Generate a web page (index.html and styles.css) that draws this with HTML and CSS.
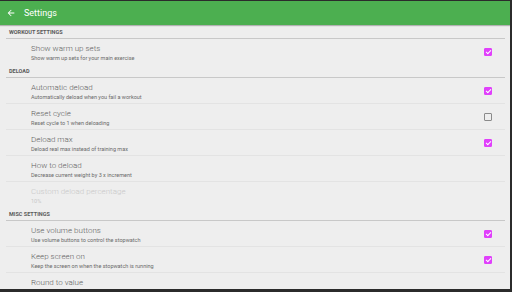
FILE: index.html
```html
<!DOCTYPE html>
<html lang="en">
<head>
    <meta charset="UTF-8">
    <meta name="viewport" content="width=device-width, initial-scale=1.0">
    <title>Settings</title>
    <link rel="stylesheet" href="styles.css">
</head>
<body>
    <div class="screen">
        <div class="toolbar">
            <svg class="back" width="10" height="10" viewBox="0 0 24 24">
                <path d="M20 11H7.83l5.59-5.59L12 4l-8 8 8 8 1.41-1.41L7.83 13H20v-2z" fill="#fff"/>
            </svg>
            <span class="title">Settings</span>
        </div>

        <div class="list">
            <div class="category">Workout settings</div>
            <div class="pref last">
                <div class="text">
                    <div class="pref-title">Show warm up sets</div>
                    <div class="pref-summary">Show warm up sets for your main exercise</div>
                </div>
                <span class="check on"></span>
            </div>

            <div class="category">Deload</div>
            <div class="pref">
                <div class="text">
                    <div class="pref-title">Automatic deload</div>
                    <div class="pref-summary">Automatically deload when you fail a workout</div>
                </div>
                <span class="check on"></span>
            </div>
            <div class="pref">
                <div class="text">
                    <div class="pref-title">Reset cycle</div>
                    <div class="pref-summary">Reset cycle to 1 when deloading</div>
                </div>
                <span class="check"></span>
            </div>
            <div class="pref">
                <div class="text">
                    <div class="pref-title">Deload max</div>
                    <div class="pref-summary">Deload real max instead of training max</div>
                </div>
                <span class="check on"></span>
            </div>
            <div class="pref">
                <div class="text">
                    <div class="pref-title">How to deload</div>
                    <div class="pref-summary">Decrease current weight by 3 x increment</div>
                </div>
            </div>
            <div class="pref last disabled">
                <div class="text">
                    <div class="pref-title">Custom deload percentage</div>
                    <div class="pref-summary">10%</div>
                </div>
            </div>

            <div class="category">Misc settings</div>
            <div class="pref">
                <div class="text">
                    <div class="pref-title">Use volume buttons</div>
                    <div class="pref-summary">Use volume buttons to control the stopwatch</div>
                </div>
                <span class="check on"></span>
            </div>
            <div class="pref">
                <div class="text">
                    <div class="pref-title">Keep screen on</div>
                    <div class="pref-summary">Keep the screen on when the stopwatch is running</div>
                </div>
                <span class="check on"></span>
            </div>
            <div class="pref">
                <div class="text">
                    <div class="pref-title">Round to value</div>
                    <div class="pref-summary">2.5</div>
                </div>
            </div>
        </div>
    </div>
</body>
</html>
```

FILE: styles.css
```css
html, body {
    margin: 0;
    padding: 0;
}
body {
    font-family: Roboto, "Liberation Sans", sans-serif;
    background-color: #2b2b2b;
    overflow: hidden;
}
.screen {
    width: 510px;
    height: 288px;
    margin-top: 1px;
    background-color: #eeeeee;
    overflow: hidden;
}
.toolbar {
    height: 24px;
    background-color: #4caf50;
    display: flex;
    align-items: center;
    padding-left: 6px;
    box-shadow: 0 1px 1px rgba(0, 0, 0, 0.25);
}
.back {
    margin-right: 8px;
}
.title {
    color: #ffffff;
    font-size: 9px;
}
.list {
    padding: 0 5px 0 6px;
}
.category {
    height: 13px;
    padding-left: 3px;
    line-height: 15px;
    font-size: 5.5px;
    font-weight: bold;
    text-transform: uppercase;
    color: #5a5a5a;
    border-bottom: 1px solid #c8c8c8;
}
.pref {
    height: 25px;
    display: flex;
    align-items: center;
    border-bottom: 1px solid #e3e3e3;
}
.pref.last {
    border-bottom: none;
}
.text {
    flex: 1;
    padding-left: 25px;
    padding-top: 3px;
}
.pref-title {
    font-size: 8px;
    font-weight: 300;
    color: #5e5e5e;
    line-height: 10px;
}
.pref-summary {
    font-size: 5.5px;
    color: #6a6a6a;
    line-height: 8px;
}
.disabled .pref-title,
.disabled .pref-summary {
    color: #c8c8c8;
}
.check {
    width: 6px;
    height: 6px;
    margin-right: 13px;
    border: 1px solid #8a8a8a;
    border-radius: 1px;
    position: relative;
}
.check.on {
    background-color: #e040fb;
    border-color: #e040fb;
}
.check.on::after {
    content: "";
    position: absolute;
    left: 2px;
    top: 0;
    width: 2px;
    height: 4px;
    border: solid #ffffff;
    border-width: 0 1px 1px 0;
    transform: rotate(45deg);
}
```
